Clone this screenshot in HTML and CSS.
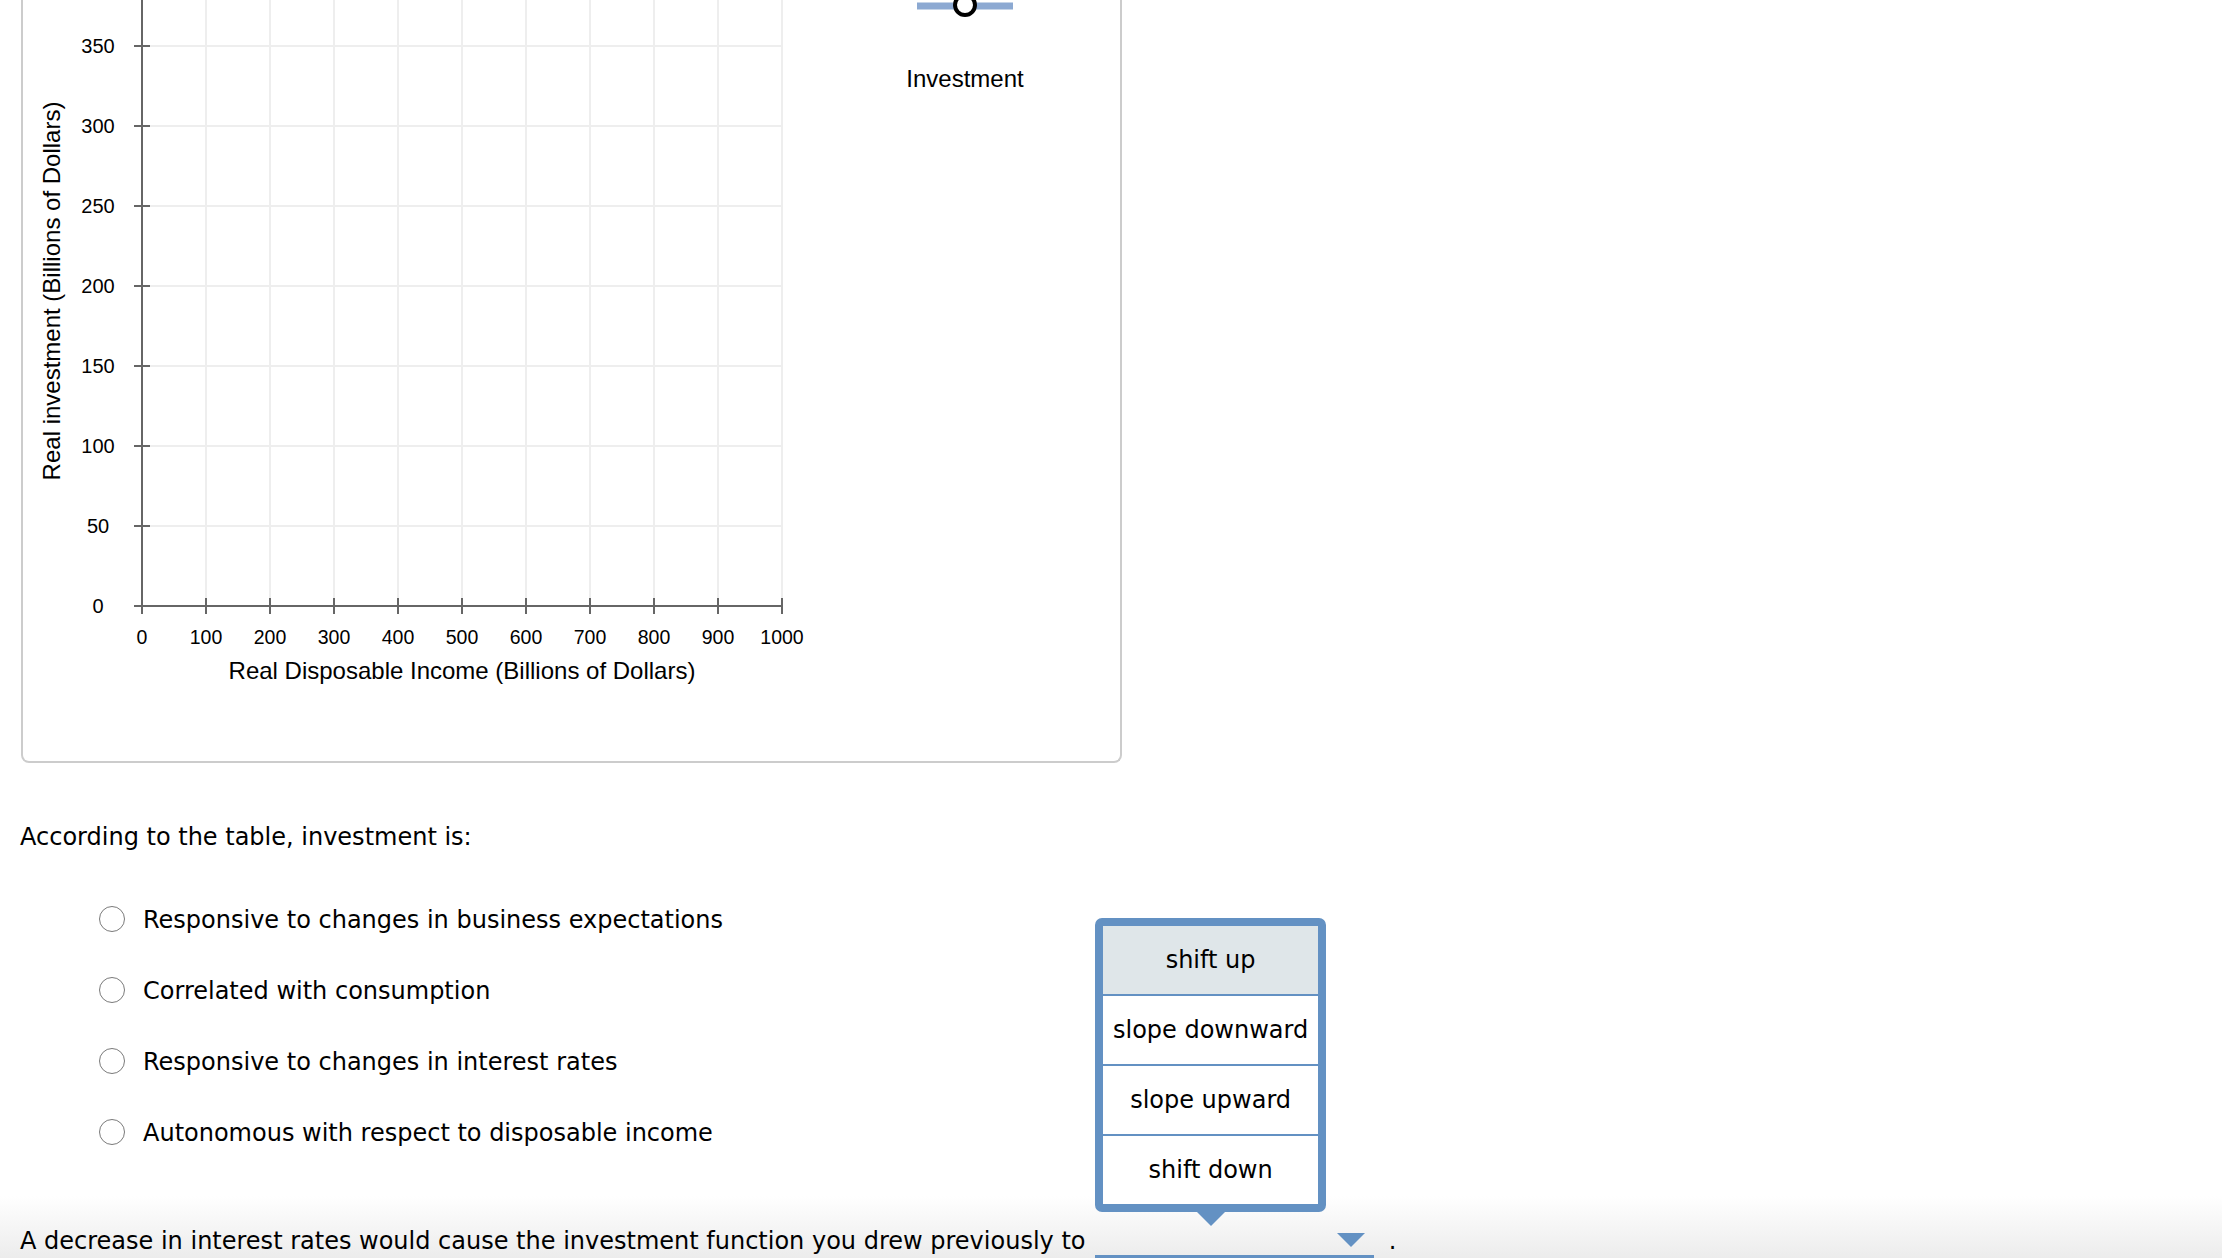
FILE: index.html
```html
<!DOCTYPE html>
<html lang="en">
<head>
<meta charset="utf-8">
<title>Investment function</title>
<link rel="stylesheet" href="styles.css">
</head>
<body>
<div class="page">
  <div class="panel">
    <svg class="chart" width="1097" height="761" viewBox="23 0 1097 761" xmlns="http://www.w3.org/2000/svg">
      <g class="grid">
        <line x1="206" y1="0" x2="206" y2="606"/>
        <line x1="270" y1="0" x2="270" y2="606"/>
        <line x1="334" y1="0" x2="334" y2="606"/>
        <line x1="398" y1="0" x2="398" y2="606"/>
        <line x1="462" y1="0" x2="462" y2="606"/>
        <line x1="526" y1="0" x2="526" y2="606"/>
        <line x1="590" y1="0" x2="590" y2="606"/>
        <line x1="654" y1="0" x2="654" y2="606"/>
        <line x1="718" y1="0" x2="718" y2="606"/>
        <line x1="782" y1="0" x2="782" y2="606"/>
        <line x1="142" y1="46" x2="782" y2="46"/>
        <line x1="142" y1="126" x2="782" y2="126"/>
        <line x1="142" y1="206" x2="782" y2="206"/>
        <line x1="142" y1="286" x2="782" y2="286"/>
        <line x1="142" y1="366" x2="782" y2="366"/>
        <line x1="142" y1="446" x2="782" y2="446"/>
        <line x1="142" y1="526" x2="782" y2="526"/>
      </g>
      <g class="axis">
        <line x1="142" y1="0" x2="142" y2="607"/>
        <line x1="134" y1="606" x2="783" y2="606"/>
        <line x1="134" y1="46" x2="150" y2="46"/>
        <line x1="134" y1="126" x2="150" y2="126"/>
        <line x1="134" y1="206" x2="150" y2="206"/>
        <line x1="134" y1="286" x2="150" y2="286"/>
        <line x1="134" y1="366" x2="150" y2="366"/>
        <line x1="134" y1="446" x2="150" y2="446"/>
        <line x1="134" y1="526" x2="150" y2="526"/>
        <line x1="142" y1="598" x2="142" y2="614"/>
        <line x1="206" y1="598" x2="206" y2="614"/>
        <line x1="270" y1="598" x2="270" y2="614"/>
        <line x1="334" y1="598" x2="334" y2="614"/>
        <line x1="398" y1="598" x2="398" y2="614"/>
        <line x1="462" y1="598" x2="462" y2="614"/>
        <line x1="526" y1="598" x2="526" y2="614"/>
        <line x1="590" y1="598" x2="590" y2="614"/>
        <line x1="654" y1="598" x2="654" y2="614"/>
        <line x1="718" y1="598" x2="718" y2="614"/>
        <line x1="782" y1="598" x2="782" y2="614"/>
      </g>
      <g class="ylabels">
        <text x="98" y="53">350</text>
        <text x="98" y="133">300</text>
        <text x="98" y="213">250</text>
        <text x="98" y="293">200</text>
        <text x="98" y="373">150</text>
        <text x="98" y="453">100</text>
        <text x="98" y="533">50</text>
        <text x="98" y="613">0</text>
      </g>
      <g class="xlabels">
        <text x="142" y="644">0</text>
        <text x="206" y="644">100</text>
        <text x="270" y="644">200</text>
        <text x="334" y="644">300</text>
        <text x="398" y="644">400</text>
        <text x="462" y="644">500</text>
        <text x="526" y="644">600</text>
        <text x="590" y="644">700</text>
        <text x="654" y="644">800</text>
        <text x="718" y="644">900</text>
        <text x="782" y="644">1000</text>
      </g>
      <text class="title" x="462" y="679">Real Disposable Income (Billions of Dollars)</text>
      <text class="title" x="52" y="299" transform="rotate(-90 52 291)">Real investment (Billions of Dollars)</text>
      <g class="legend">
        <line class="legend-line" x1="917" y1="6" x2="1013" y2="6"/>
        <circle class="legend-dot" cx="965" cy="5" r="10"/>
        <text class="title" x="965" y="87">Investment</text>
      </g>
    </svg>
  </div>

  <p class="prompt">According to the table, investment is:</p>

  <ul class="choices">
    <li class="choice"><span class="radio"></span><span>Responsive to changes in business expectations</span></li>
    <li class="choice"><span class="radio"></span><span>Correlated with consumption</span></li>
    <li class="choice"><span class="radio"></span><span>Responsive to changes in interest rates</span></li>
    <li class="choice"><span class="radio"></span><span>Autonomous with respect to disposable income</span></li>
  </ul>

  <div class="sentence">A decrease in interest rates would cause the investment function you drew previously to <span class="select">&nbsp;<span class="select-arrow"></span><span class="menu"><span class="menu-item is-active">shift up</span><span class="menu-item">slope downward</span><span class="menu-item">slope upward</span><span class="menu-item">shift down</span></span></span> .</div>
</div>
</body>
</html>
```
FILE: styles.css
```css
html {
  background: linear-gradient(to bottom, #ffffff 0, #ffffff 1196px, #ececec 1258px);
}

html,
body {
  margin: 0;
  height: 1258px;
  overflow: hidden;
}

body {
  font-family: "DejaVu Sans", Verdana, sans-serif;
  font-size: 24px;
  color: #000;
}

.page {
  padding-left: 20px;
}

.panel {
  margin-left: 1px;
  width: 1101px;
  height: 763px;
  box-sizing: border-box;
  border: 2px solid #cccccc;
  border-top: 0;
  border-radius: 0 0 8px 8px;
  background: #fff;
}

.chart {
  display: block;
}

.chart text {
  font-family: "Liberation Sans", Arial, sans-serif;
  fill: #000;
}

.grid line {
  stroke: #eeeeee;
  stroke-width: 2;
}

.axis line {
  stroke: #666666;
  stroke-width: 2;
}

.ylabels text {
  font-size: 20px;
  text-anchor: middle;
}

.xlabels text {
  font-size: 19.5px;
  text-anchor: middle;
}

.chart .title {
  font-size: 24px;
  text-anchor: middle;
}

.legend-line {
  stroke: #8ca9d2;
  stroke-width: 7;
}

.legend-dot {
  fill: #fff;
  stroke: #000;
  stroke-width: 4;
}

.prompt {
  margin: 60px 0 0;
  line-height: 28px;
}

.choices {
  list-style: none;
  margin: 55px 0 0;
  padding: 0 0 0 79px;
  display: flex;
  flex-direction: column;
  gap: 43px;
}

.choice {
  display: flex;
  align-items: center;
  gap: 18px;
  line-height: 28px;
}

.radio {
  width: 26px;
  height: 26px;
  box-sizing: border-box;
  border: 1.5px solid #7a7a7a;
  border-radius: 50%;
  background: #fff;
  margin-top: -3px;
}

.sentence {
  margin-top: 80px;
  line-height: 28px;
  white-space: nowrap;
}

.select {
  display: inline-block;
  position: relative;
  width: 279px;
  line-height: 28px;
  border-bottom: 4px solid #6391c3;
  margin-left: 2px;
  margin-right: 7px;
  vertical-align: baseline;
}

.select-arrow {
  position: absolute;
  right: 9px;
  top: 6px;
  width: 0;
  height: 0;
  border-left: 14px solid transparent;
  border-right: 14px solid transparent;
  border-top: 14px solid #6391c3;
}

.menu {
  position: absolute;
  left: 0;
  bottom: 43px;
  width: 231px;
  box-sizing: border-box;
  border: 8px solid #6391c3;
  border-radius: 7px;
  background: #fff;
  display: flex;
  flex-direction: column;
}

.menu::after {
  content: "";
  position: absolute;
  left: 50%;
  top: calc(100% + 7px);
  margin-left: -15px;
  width: 0;
  height: 0;
  border-left: 15px solid transparent;
  border-right: 15px solid transparent;
  border-top: 15px solid #6391c3;
}

.menu-item {
  display: block;
  height: 68px;
  line-height: 68px;
  text-align: center;
  color: #000;
}

.menu-item + .menu-item {
  border-top: 2px solid #6391c3;
}

.menu-item.is-active {
  background: #dfe6e9;
}
```
